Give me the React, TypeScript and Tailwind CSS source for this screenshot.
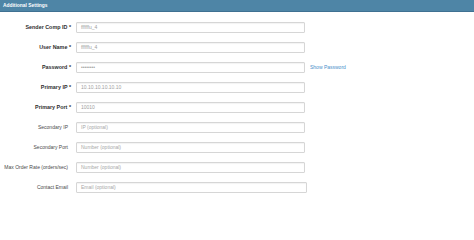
import React from "react";

type Field = {
  label: string;
  required?: boolean;
  value?: string;
  placeholder?: string;
  wide?: boolean;
  extra?: React.ReactNode;
};

const fields: Field[] = [
  { label: "Sender Comp ID", required: true, value: "ffffffu_4" },
  { label: "User Name", required: true, value: "ffffffu_4" },
  {
    label: "Password",
    required: true,
    value: "••••••••",
    extra: <span className="ml-[5px] text-[5px] text-[#4a8fca]">Show Password</span>,
  },
  { label: "Primary IP", required: true, value: "10.10.10.10.10.10" },
  { label: "Primary Port", required: true, value: "10010" },
  { label: "Secondary IP", placeholder: "IP (optional)" },
  { label: "Secondary Port", placeholder: "Number (optional)" },
  { label: "Max Order Rate (orders/sec)", placeholder: "Number (optional)" },
  { label: "Contact Email", placeholder: "Email (optional)", wide: true },
];

function FormRow({ field }: { field: Field }) {
  return (
    <div className="flex items-center h-[11px]">
      <div
        className={
          field.required
            ? "w-[71px] text-right text-[5.4px] font-bold text-[#2f2f2f] whitespace-nowrap"
            : "w-[68px] mr-[3px] text-right text-[5px] text-[#4a4a4a] whitespace-nowrap"
        }
      >
        {field.label}
        {field.required && " *"}
      </div>
      <div
        className={
          field.wide
            ? "ml-[5px] w-[231px] h-[11px] rounded-[1px] border border-[#d6d6d6] shadow-[inset_0_1px_1px_rgba(0,0,0,0.05)] bg-white flex items-center pl-[4px] text-[5px] text-[#a0a0a0]"
            : "ml-[5px] w-[229px] h-[11px] rounded-[1px] border border-[#d6d6d6] shadow-[inset_0_1px_1px_rgba(0,0,0,0.05)] bg-white flex items-center pl-[4px] text-[5px] text-[#a0a0a0]"
        }
      >
        {field.value ?? <span className="text-[#a8a8a8]">{field.placeholder}</span>}
      </div>
      {field.extra}
    </div>
  );
}

export default function App() {
  return (
    <div
      className="w-[474px] h-[201px] bg-white overflow-hidden"
      style={{ fontFamily: '"Liberation Sans", Arial, sans-serif' }}
    >
      <div className="h-[12px] bg-[#4e85a6] border-b border-[#3f7192] flex items-center px-[3px]">
        <span className="text-[4.9px] font-bold text-white">Additional Settings</span>
      </div>
      <div className="pt-[10px] flex flex-col gap-[9px]">
        {fields.map((f) => (
          <FormRow key={f.label} field={f} />
        ))}
      </div>
    </div>
  );
}
